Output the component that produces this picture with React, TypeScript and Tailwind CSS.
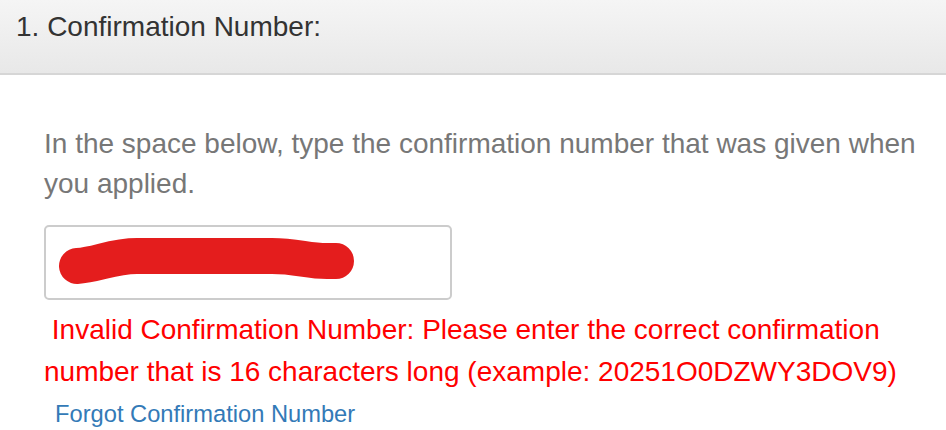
export default function App() {
  return (
    <div className="w-[946px] h-[430px] overflow-hidden bg-white font-['Liberation_Sans',Arial,sans-serif]">
      {/* Panel heading */}
      <div className="h-[75px] pl-4 pt-[7px] bg-gradient-to-b from-[#f5f5f5] to-[#e8e8e8] border-b-2 border-[#d6d6d6]">
        <h3 className="text-[28px] leading-[40px] text-[#333]">1. Confirmation Number:</h3>
      </div>

      {/* Panel body */}
      <div className="pl-[44px] pr-[26px] pt-[49px]">
        <p className="text-[28px] leading-[40px] text-[#777]">
          In the space below, type the confirmation number that was given when you applied.
        </p>

        <div className="relative mt-[21px] w-[408px] h-[75px] rounded-[5px] border-2 border-[#ccc] bg-white">
          <input className="w-full h-full bg-transparent outline-none" aria-label="Confirmation number" />
          {/* redaction scribble */}
          <svg className="absolute left-[-44px] top-[-225px] pointer-events-none" width="400" height="300" viewBox="0 0 400 300">
            <path
              d="M75 264 C 95 263, 110 254, 135 254 L 270 254 C 295 254, 305 259, 325 259 L 334 259"
              fill="none"
              stroke="#e41d1d"
              strokeWidth="36"
              strokeLinecap="round"
              strokeLinejoin="round"
            />
          </svg>
        </div>

        <div className="mt-[9px] text-[28px] leading-[42px] text-[#ff0000]">
          &nbsp;Invalid Confirmation Number: Please enter the correct confirmation number that is 16 characters long (example: 20251O0DZWY3DOV9)
        </div>

        <a href="#" className="block mt-[4px] ml-[11px] text-[23.7px] leading-[34px] text-[#337ab7]">
          Forgot Confirmation Number
        </a>
      </div>
    </div>
  );
}
